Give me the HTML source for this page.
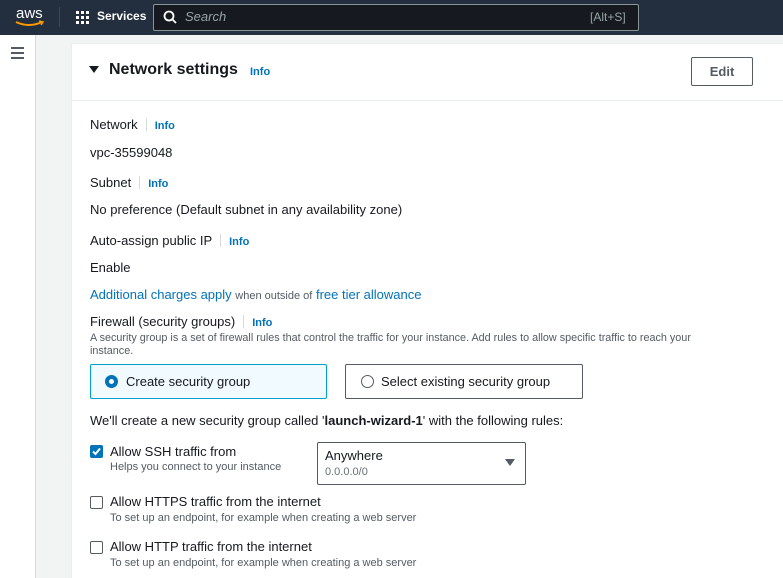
<!DOCTYPE html>
<html><head><style>
*{margin:0;padding:0;box-sizing:border-box}
html{width:783px;height:578px;overflow:hidden}
body{width:783px;height:578px;overflow:hidden;font-family:"Liberation Sans",Arial,sans-serif;background:#f2f3f3;position:relative;color:#16191f;font-size:13px}
.a{position:absolute;white-space:nowrap}
.hdr{position:absolute;left:0;top:0;width:783px;height:35px;background:#232f3e}
.side{position:absolute;left:0;top:35px;width:36px;height:543px;background:#fff;border-right:1px solid #d5dbdb}
.card{position:absolute;left:71px;top:43px;width:712px;height:535px;background:#fff;border:1px solid #eaeded;border-bottom:none;border-right:none}
.info{color:#0073bb;font-weight:bold;font-size:11px}
.sep{display:inline-block;width:1px;height:13px;background:#d5dbdb;vertical-align:-2px;margin:0 8px}
.sub{font-size:11px;color:#545b64}
.link{color:#0073bb}
.cb{position:absolute;width:13px;height:13px;border:1px solid #545b64;border-radius:2px;background:#fff}
</style></head><body>
<div class="hdr"></div>
<div class="a" style="left:16px;top:5px;color:#fff;font-size:15px">aws</div>
<svg class="a" style="left:15px;top:20px" width="30" height="8"><path d="M1 2 Q14 8 27 2" stroke="#ff9900" stroke-width="2" fill="none"/><path d="M24 1 L28 2 L26 5" stroke="#ff9900" stroke-width="1.5" fill="none"/></svg>
<div class="a" style="left:59px;top:7px;width:1px;height:20px;background:#414750"></div>
<svg class="a" style="left:76px;top:11px" width="14" height="14" fill="#fff"><rect x="0" y="0" width="3" height="3"/><rect x="5" y="0" width="3" height="3"/><rect x="10" y="0" width="3" height="3"/><rect x="0" y="5" width="3" height="3"/><rect x="5" y="5" width="3" height="3"/><rect x="10" y="5" width="3" height="3"/><rect x="0" y="10" width="3" height="3"/><rect x="5" y="10" width="3" height="3"/><rect x="10" y="10" width="3" height="3"/></svg>
<div class="a" style="left:97px;top:9px;color:#fff;font-size:12px;font-weight:bold">Services</div>
<div class="a" style="left:153px;top:4px;width:486px;height:27px;background:#16191f;border:1px solid #879596;border-radius:2px"></div>
<svg class="a" style="left:163px;top:10px" width="14" height="14"><circle cx="6" cy="6" r="4.5" stroke="#fff" stroke-width="1.8" fill="none"/><path d="M9.5 9.5 L13 13" stroke="#fff" stroke-width="1.8"/></svg>
<div class="a" style="left:185px;top:9px;color:#95a5a6;font-style:italic;font-size:13px">Search</div>
<div class="a" style="left:590px;top:10px;color:#95a5a6;font-size:12px">[Alt+S]</div>
<div class="side"></div>
<div class="a" style="left:11px;top:47px;width:13px;height:2px;background:#545b64;box-shadow:0 5px 0 #545b64,0 10px 0 #545b64"></div>
<div class="card"></div>
<div class="a" style="left:72px;top:100px;width:711px;height:1px;background:#eaeded"></div>
<svg class="a" style="left:89px;top:66px" width="10" height="8"><path d="M0 0 L10 0 L5 7Z" fill="#16191f"/></svg>
<div class="a" style="left:109px;top:61px;font-size:16px;font-weight:bold">Network settings</div>
<div class="a info" style="left:250px;top:66px">Info</div>
<div class="a" style="left:691px;top:57px;width:62px;height:29px;border:1px solid #545b64;border-radius:2px;text-align:center;line-height:27px;font-weight:bold;color:#545b64">Edit</div>
<div class="a" style="left:90px;top:117px">Network<span class="sep"></span><span class="info">Info</span></div>
<div class="a" style="left:90px;top:145px">vpc-35599048</div>
<div class="a" style="left:90px;top:175px">Subnet<span class="sep"></span><span class="info">Info</span></div>
<div class="a" style="left:90px;top:202px">No preference (Default subnet in any availability zone)</div>
<div class="a" style="left:90px;top:233px">Auto-assign public IP<span class="sep"></span><span class="info">Info</span></div>
<div class="a" style="left:90px;top:260px">Enable</div>
<div class="a" style="left:90px;top:287px"><span class="link">Additional charges apply</span> <span class="sub">when outside of</span> <span class="link">free tier allowance</span></div>
<div class="a" style="left:90px;top:314px">Firewall (security groups)<span class="sep"></span><span class="info">Info</span></div>
<div class="a sub" style="left:90px;top:332px;line-height:13px;font-size:10.8px">A security group is a set of firewall rules that control the traffic for your instance. Add rules to allow specific traffic to reach your</div>
<div class="a sub" style="left:90px;top:345px;line-height:13px;font-size:10.8px">instance.</div>
<div class="a" style="left:90px;top:364px;width:237px;height:35px;background:#f1faff;border:1px solid #00a1c9;border-radius:2px"></div>
<div class="a" style="left:105px;top:375px;width:13px;height:13px;border-radius:50%;border:4px solid #0073bb;background:#fff"></div>
<div class="a" style="left:126px;top:374px">Create security group</div>
<div class="a" style="left:345px;top:364px;width:238px;height:35px;border:1px solid #545b64;border-radius:2px"></div>
<div class="a" style="left:361px;top:375px;width:13px;height:13px;border-radius:50%;border:1px solid #545b64"></div>
<div class="a" style="left:381px;top:374px">Select existing security group</div>
<div class="a" style="left:90px;top:413px">We'll create a new security group called '<b>launch-wizard-1</b>' with the following rules:</div>
<div class="cb" style="left:90px;top:445px;background:#0073bb;border-color:#0073bb"></div>
<svg class="a" style="left:91px;top:446px" width="11" height="11"><path d="M2 5.5 L4.5 8 L9 2.5" stroke="#fff" stroke-width="2" fill="none"/></svg>
<div class="a" style="left:110px;top:444px">Allow SSH traffic from</div>
<div class="a sub" style="left:110px;top:461px">Helps you connect to your instance</div>
<div class="a" style="left:317px;top:442px;width:209px;height:43px;border:1px solid #545b64;border-radius:2px"></div>
<div class="a" style="left:325px;top:448px">Anywhere</div>
<div class="a sub" style="left:325px;top:466px;color:#687078">0.0.0.0/0</div>
<svg class="a" style="left:505px;top:459px" width="10" height="8"><path d="M0 0 L10 0 L5 7Z" fill="#545b64"/></svg>
<div class="cb" style="left:90px;top:496px"></div>
<div class="a" style="left:110px;top:494px">Allow HTTPS traffic from the internet</div>
<div class="a sub" style="left:110px;top:512px">To set up an endpoint, for example when creating a web server</div>
<div class="cb" style="left:90px;top:541px"></div>
<div class="a" style="left:110px;top:539px">Allow HTTP traffic from the internet</div>
<div class="a sub" style="left:110px;top:557px">To set up an endpoint, for example when creating a web server</div>
</body></html>
